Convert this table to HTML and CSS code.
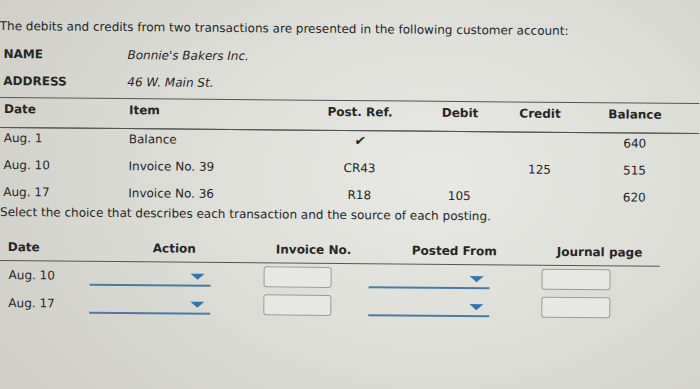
FILE: index.html
```html
<!DOCTYPE html>
<html>
<head>
    <title>Customer Account</title>
    <link rel="stylesheet" href="styles.css">
</head>
<body>
    <div class="page">
        <p class="intro">The debits and credits from two transactions are presented in the following customer account:</p>

        <div class="customer">
            <span class="label">NAME</span>
            <span class="value">Bonnie's Bakers Inc.</span>
            <span class="label">ADDRESS</span>
            <span class="value">46 W. Main St.</span>
        </div>

        <table class="ledger">
            <thead>
                <tr>
                    <th class="c-date">Date</th>
                    <th class="c-item">Item</th>
                    <th class="c-ref">Post. Ref.</th>
                    <th class="c-debit">Debit</th>
                    <th class="c-credit">Credit</th>
                    <th class="c-balance">Balance</th>
                </tr>
            </thead>
            <tbody>
                <tr>
                    <td class="c-date">Aug. 1</td>
                    <td class="c-item">Balance</td>
                    <td class="c-ref"><span class="check">&#10004;</span></td>
                    <td></td>
                    <td></td>
                    <td class="c-balance">640</td>
                </tr>
                <tr>
                    <td class="c-date">Aug. 10</td>
                    <td class="c-item">Invoice No. 39</td>
                    <td class="c-ref">CR43</td>
                    <td></td>
                    <td class="c-credit">125</td>
                    <td class="c-balance">515</td>
                </tr>
                <tr>
                    <td class="c-date">Aug. 17</td>
                    <td class="c-item">Invoice No. 36</td>
                    <td class="c-ref">R18</td>
                    <td class="c-debit">105</td>
                    <td></td>
                    <td class="c-balance">620</td>
                </tr>
            </tbody>
        </table>

        <p class="prompt">Select the choice that describes each transaction and the source of each posting.</p>

        <div class="answers">
            <div class="answers-head">
                <span class="h-date">Date</span>
                <span class="h-action">Action</span>
                <span class="h-invoice">Invoice No.</span>
                <span class="h-posted">Posted From</span>
                <span class="h-journal">Journal page</span>
            </div>
            <div class="answer-row">
                <span class="row-date">Aug. 10</span>
                <div class="dropdown action"><span class="caret"></span></div>
                <div class="box invoice"></div>
                <div class="dropdown posted"><span class="caret"></span></div>
                <div class="box journal"></div>
            </div>
            <div class="answer-row">
                <span class="row-date">Aug. 17</span>
                <div class="dropdown action"><span class="caret"></span></div>
                <div class="box invoice"></div>
                <div class="dropdown posted"><span class="caret"></span></div>
                <div class="box journal"></div>
            </div>
        </div>
    </div>
</body>
</html>
```

FILE: styles.css
```css
html {
    background: radial-gradient(ellipse 70% 90% at 62% 45%, #e8e8e4 0%, #dfdfda 45%, #d0d0c9 100%);
    min-height: 100%;
}

body {
    margin: 0;
    width: 700px;
    height: 389px;
    overflow: hidden;
    font-family: "DejaVu Sans", Verdana, sans-serif;
    font-size: 12px;
    line-height: 14px;
    color: #262626;
}

.page {
    transform: rotate(0.5deg);
    transform-origin: 0 0;
}

.intro {
    margin: 0;
    padding-top: 19px;
}

/* name / address block */
.customer {
    display: grid;
    grid-template-columns: 126px 1fr;
    row-gap: 13px;
    margin-top: 14px;
}

.customer .label {
    font-weight: bold;
    padding-left: 4px;
}

.customer .value {
    font-style: italic;
    padding-left: 2px;
}

/* ledger table */
.ledger {
    width: 700px;
    margin-top: 9px;
    border-collapse: collapse;
    table-layout: fixed;
}

.ledger th,
.ledger td {
    box-sizing: border-box;
    vertical-align: top;
}

.ledger th {
    height: 30px;
    padding: 4px 0 0;
    text-align: left;
    font-weight: bold;
    border-top: 1px solid #555;
    border-bottom: 1px solid #555;
}

.ledger td {
    height: 27px;
    padding: 3px 0 0;
}

.ledger tbody tr:last-child td {
    height: 21px;
}

.ledger .c-date { width: 126px; padding-left: 5px; }
.ledger .c-item { width: 184px; padding-left: 4px; }
.ledger .c-ref { width: 102px; text-align: center; }
.ledger .c-debit { width: 98px; text-align: center; }
.ledger .c-credit { width: 62px; text-align: center; }
.ledger .c-balance { width: 128px; text-align: center; }

.check {
    font-size: 13px;
    color: #222;
    display: inline-block;
    transform: skewX(-10deg);
}

.prompt {
    margin: 2px 0 0;
    padding-left: 2px;
}

/* answer grid */
.answers {
    margin-top: 21px;
    width: 662px;
}

.answers-head,
.answer-row {
    display: grid;
    grid-template-columns: 88px 152px 120px 160px 142px;
}

.answers-head {
    font-weight: bold;
    padding-bottom: 6px;
    border-bottom: 1px solid #555;
}

.h-date { padding-left: 10px; }
.h-action { padding-left: 67px; }
.h-invoice { padding-left: 38px; }
.h-posted { padding-left: 54px; }
.h-journal { padding-left: 39px; }

.answer-row {
    height: 28px;
    align-items: center;
}

.row-date {
    padding-left: 11px;
}

.dropdown {
    height: 14px;
    border-bottom: 2px solid #4b7ba4;
    display: flex;
    justify-content: flex-end;
    align-items: flex-start;
    padding-top: 2px;
    margin-top: 2px;
}

.dropdown.action { margin-left: 4px; width: 121px; }
.dropdown.posted { margin-left: 11px; width: 121px; }

.caret {
    width: 0;
    height: 0;
    margin-right: 6px;
    margin-top: 3px;
    border-left: 7px solid transparent;
    border-right: 7px solid transparent;
    border-top: 6px solid #2f77ae;
}

.box {
    height: 21px;
    border: 1px solid #9c9c9a;
    border-radius: 3px;
    background-color: #e7e7e3;
    box-sizing: border-box;
}

.box.invoice { margin-left: 26px; width: 68px; }
.box.journal { margin-left: 24px; width: 69px; }
```
